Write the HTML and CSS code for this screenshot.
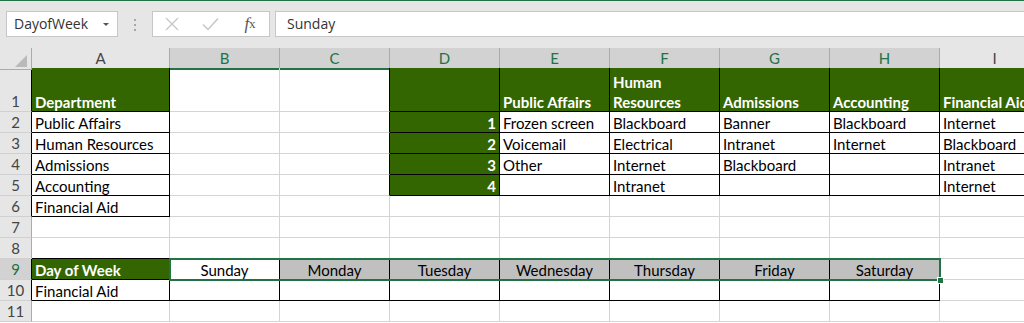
FILE: index.html
```html
<!DOCTYPE html>
<html>
<head>
    <link rel="stylesheet" href="styles.css">
</head>
<body>
    <div class="fbar">
        <div class="namebox">DayofWeek<span class="caret"></span></div>
        <div class="grip"><i></i><i></i><i></i></div>
        <div class="fbtns">
            <span class="fbtn"><svg width="14" height="14" viewBox="0 0 14 14"><path d="M1 1L13 13M13 1L1 13" stroke="#c6c6c6" stroke-width="1.3" fill="none"/></svg></span>
            <span class="fbtn"><svg width="17" height="14" viewBox="0 0 17 14"><path d="M1 7.5L6 12.5L16 1.5" stroke="#c6c6c6" stroke-width="1.5" fill="none"/></svg></span>
            <span class="fbtn fx"><i>f</i><sub>x</sub></span>
        </div>
        <div class="finput">Sunday</div>
    </div>

    <div class="sheet">
        <div class="row colhead">
            <div class="corner"></div>
            <div class="ch">A</div>
            <div class="ch on">B</div>
            <div class="ch on">C</div>
            <div class="ch on">D</div>
            <div class="ch on">E</div>
            <div class="ch on">F</div>
            <div class="ch on">G</div>
            <div class="ch on">H</div>
            <div class="ch">I</div>
        </div>

        <div class="row tall">
            <div class="hd k">1</div>
            <div class="c g bb br">Department</div>
            <div class="c"></div>
            <div class="c br"></div>
            <div class="c g bb br"></div>
            <div class="c g bb br">Public Affairs</div>
            <div class="c g bb br"><span class="wrap">Human<br>Resources</span></div>
            <div class="c g bb br">Admissions</div>
            <div class="c g bb br">Accounting</div>
            <div class="c g bb br">Financial Aid</div>
        </div>

        <div class="row">
            <div class="hd k">2</div>
            <div class="c bb br">Public Affairs</div>
            <div class="c"></div>
            <div class="c br"></div>
            <div class="c g bb br num">1</div>
            <div class="c bb br">Frozen screen</div>
            <div class="c bb br">Blackboard</div>
            <div class="c bb br">Banner</div>
            <div class="c bb br">Blackboard</div>
            <div class="c bb br">Internet</div>
        </div>

        <div class="row">
            <div class="hd k">3</div>
            <div class="c bb br">Human Resources</div>
            <div class="c"></div>
            <div class="c br"></div>
            <div class="c g bb br num">2</div>
            <div class="c bb br">Voicemail</div>
            <div class="c bb br">Electrical</div>
            <div class="c bb br">Intranet</div>
            <div class="c bb br">Internet</div>
            <div class="c bb br">Blackboard</div>
        </div>

        <div class="row">
            <div class="hd k">4</div>
            <div class="c bb br">Admissions</div>
            <div class="c"></div>
            <div class="c br"></div>
            <div class="c g bb br num">3</div>
            <div class="c bb br">Other</div>
            <div class="c bb br">Internet</div>
            <div class="c bb br">Blackboard</div>
            <div class="c bb br"></div>
            <div class="c bb br">Intranet</div>
        </div>

        <div class="row">
            <div class="hd k">5</div>
            <div class="c bb br">Accounting</div>
            <div class="c"></div>
            <div class="c br"></div>
            <div class="c g bb br num">4</div>
            <div class="c bb br"></div>
            <div class="c bb br">Intranet</div>
            <div class="c bb br"></div>
            <div class="c bb br"></div>
            <div class="c bb br">Internet</div>
        </div>

        <div class="row">
            <div class="hd k">6</div>
            <div class="c bb br">Financial Aid</div>
            <div class="c"></div>
            <div class="c"></div>
            <div class="c"></div>
            <div class="c"></div>
            <div class="c"></div>
            <div class="c"></div>
            <div class="c"></div>
            <div class="c"></div>
        </div>

        <div class="row">
            <div class="hd">7</div>
            <div class="c"></div>
            <div class="c"></div>
            <div class="c"></div>
            <div class="c"></div>
            <div class="c"></div>
            <div class="c"></div>
            <div class="c"></div>
            <div class="c"></div>
            <div class="c"></div>
        </div>

        <div class="row">
            <div class="hd">8</div>
            <div class="c bb"></div>
            <div class="c bb"></div>
            <div class="c bb"></div>
            <div class="c bb"></div>
            <div class="c bb"></div>
            <div class="c bb"></div>
            <div class="c bb"></div>
            <div class="c bb"></div>
            <div class="c"></div>
        </div>

        <div class="row">
            <div class="hd k on">9</div>
            <div class="c g bb br">Day of Week</div>
            <div class="c bb br ctr active">Sunday<div class="sel"><span class="handle"></span></div></div>
            <div class="c gy bb br ctr">Monday</div>
            <div class="c gy bb br ctr">Tuesday</div>
            <div class="c gy bb br ctr">Wednesday</div>
            <div class="c gy bb br ctr">Thursday</div>
            <div class="c gy bb br ctr">Friday</div>
            <div class="c gy bb br ctr">Saturday</div>
            <div class="c"></div>
        </div>

        <div class="row">
            <div class="hd k">10</div>
            <div class="c bb br">Financial Aid</div>
            <div class="c bb br"></div>
            <div class="c bb br"></div>
            <div class="c bb br"></div>
            <div class="c bb br"></div>
            <div class="c bb br"></div>
            <div class="c bb br"></div>
            <div class="c bb br"></div>
            <div class="c"></div>
        </div>

        <div class="row">
            <div class="hd">11</div>
            <div class="c"></div>
            <div class="c"></div>
            <div class="c"></div>
            <div class="c"></div>
            <div class="c"></div>
            <div class="c"></div>
            <div class="c"></div>
            <div class="c"></div>
            <div class="c"></div>
        </div>
    </div>
</body>
</html>
```

FILE: styles.css
```css
body {
    margin: 0;
    overflow: hidden;
    background: #fff;
    font-family: Lato, "Liberation Sans", sans-serif;
    color: #000;
}

/* formula bar */
.fbar {
    height: 48px;
    box-sizing: border-box;
    border-top: 1px solid #217346;
    background: #e6e6e6;
    display: flex;
    align-items: flex-start;
    padding-top: 10px;
    font-family: "Open Sans", "Noto Sans", sans-serif;
    font-size: 14px;
    color: #333;
}
.namebox {
    margin-left: 6px;
    width: 112px;
    height: 26px;
    box-sizing: border-box;
    border: 1px solid #c6c6c6;
    background: #fff;
    padding-left: 7px;
    line-height: 24px;
    position: relative;
}
.caret {
    position: absolute;
    right: 8px;
    top: 11px;
    border-left: 3px solid transparent;
    border-right: 3px solid transparent;
    border-top: 3px solid #555;
}
.grip {
    width: 34px;
    display: flex;
    flex-direction: column;
    align-items: center;
    padding-top: 8px;
    gap: 3px;
}
.grip i {
    width: 2px;
    height: 2px;
    background: #a6a6a6;
}
.fbtns {
    width: 118px;
    height: 26px;
    box-sizing: border-box;
    border: 1px solid #c6c6c6;
    background: #fff;
    display: flex;
}
.fbtn {
    flex: 1;
    display: flex;
    align-items: center;
    justify-content: center;
}
.fx {
    font-family: "Liberation Serif", serif;
    font-size: 17px;
    color: #555;
    padding-left: 2px;
}
.fx sub {
    font-size: 13px;
    vertical-align: -2px;
}
.finput {
    flex: 1;
    margin-left: 5px;
    height: 26px;
    box-sizing: border-box;
    border: 1px solid #c6c6c6;
    border-right: 0;
    background: #fff;
    padding-left: 11px;
    line-height: 24px;
}

/* grid */
.row {
    display: grid;
    grid-template-columns: 32px 138px repeat(8, 110px);
    height: 21px;
    font-size: 15px;
}
.row.tall {
    height: 44px;
}
.row.colhead {
    height: 20px;
}
.corner {
    background: #e6e6e6;
    border-right: 1px solid #ababab;
    border-bottom: 1px solid #ababab;
    position: relative;
}
.corner::after {
    content: "";
    position: absolute;
    right: 4px;
    bottom: 2px;
    width: 12px;
    height: 12px;
    background: #b9b9b9;
    clip-path: polygon(100% 0, 100% 100%, 0 100%);
}
.ch {
    background: #e6e6e6;
    color: #444;
    text-align: center;
    line-height: 20px;
    border-right: 1px solid #ababab;
    border-bottom: 1px solid #ababab;
}
.ch.on {
    background: #d2d2d2;
    color: #217346;
    border-bottom: 2px solid #217346;
}
.hd {
    background: #e6e6e6;
    color: #444;
    text-align: center;
    border-right: 1px solid #ababab;
    border-bottom: 1px solid #d0d0d0;
    display: flex;
    align-items: flex-end;
    justify-content: center;
    line-height: 20px;
}
.hd.k {
    border-right-color: #000;
}
.hd.on {
    background: #d2d2d2;
    color: #217346;
}

.c {
    border-right: 1px solid #d4d4d4;
    border-bottom: 1px solid #d4d4d4;
    padding: 0 3px;
    line-height: 18px;
    white-space: nowrap;
    overflow: hidden;
    display: flex;
    flex-direction: column;
    justify-content: flex-end;
}
.c .wrap {
    line-height: 20px;
    margin-bottom: -1px;
}
.c.bb {
    border-bottom-color: #000;
}
.c.br {
    border-right-color: #000;
}
.c.g {
    background: #336600;
    color: #fff;
    font-weight: 700;
}
.c.gy {
    background: #c0c0c0;
}
.c.num {
    align-items: flex-end;
}
.c.ctr {
    align-items: center;
}
.c.active {
    overflow: visible;
    position: relative;
}
.sel {
    position: absolute;
    left: -1px;
    top: -1px;
    width: 772px;
    height: 23px;
    box-sizing: border-box;
    border: 2px solid #217346;
    z-index: 2;
}
.handle {
    position: absolute;
    right: -5px;
    bottom: -5px;
    width: 5px;
    height: 5px;
    background: #217346;
    border: 1px solid #fff;
}
```
